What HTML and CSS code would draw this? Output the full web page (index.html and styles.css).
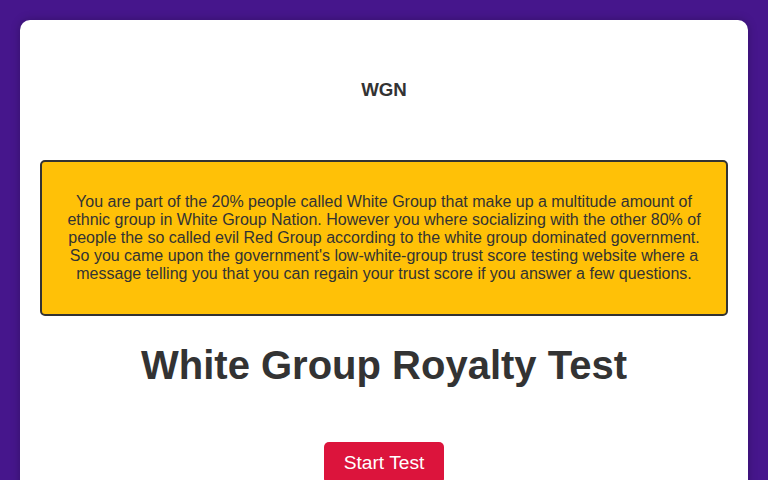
FILE: index.html
```html
<!DOCTYPE html>
<html lang="en">
<head>
<meta charset="utf-8">
<title>White Group Royalty Test</title>
<link rel="stylesheet" href="styles.css">
</head>
<body>
  <main class="container">
    <header class="site-header">
      <h3 class="brand">WGN</h3>
    </header>
    <section class="story">
      <p>You are part of the 20% people called White Group that make up a multitude amount of ethnic group in White Group Nation. However you where socializing with the other 80% of people the so called evil Red Group according to the white group dominated government. So you came upon the government's low-white-group trust score testing website where a message telling you that you can regain your trust score if you answer a few questions.</p>
    </section>
    <h1 class="title">White Group Royalty Test</h1>
    <div class="actions">
      <button class="start-btn" type="button">Start Test</button>
    </div>
  </main>
</body>
</html>
```
FILE: styles.css
```css
html, body {
  margin: 0;
  padding: 0;
}

body {
  background: #46168c;
  font-family: "Liberation Sans", Arial, sans-serif;
  color: #333;
  padding: 20px;
  min-height: 100vh;
  box-sizing: border-box;
}

.container {
  background: #fff;
  border-radius: 10px;
  padding: 20px;
  box-shadow: 0 0 10px rgba(0, 0, 0, 0.25);
  min-height: 600px;
}

.site-header {
  padding: 39px 0 40px;
  text-align: center;
}

.brand {
  margin: 0;
  font-size: 18.72px;
  font-weight: bold;
  line-height: 21px;
}

.story {
  margin-top: 20px;
  background: #ffc107;
  border: 2px solid #333;
  border-radius: 5px;
  padding: 31px 20px;
  text-align: center;
}

.story p {
  margin: 0;
  font-size: 16px;
  line-height: 18px;
}

.title {
  margin: 26px 0 0;
  text-align: center;
  font-size: 40px;
  line-height: 46px;
  font-weight: bold;
}

.actions {
  margin-top: 54px;
  text-align: center;
}

.start-btn {
  background: #dc143c;
  color: #fff;
  border: none;
  border-radius: 5px;
  font-family: "Liberation Sans", Arial, sans-serif;
  font-size: 19.2px;
  padding: 10px 20px;
  line-height: 22px;
  cursor: pointer;
}
```
